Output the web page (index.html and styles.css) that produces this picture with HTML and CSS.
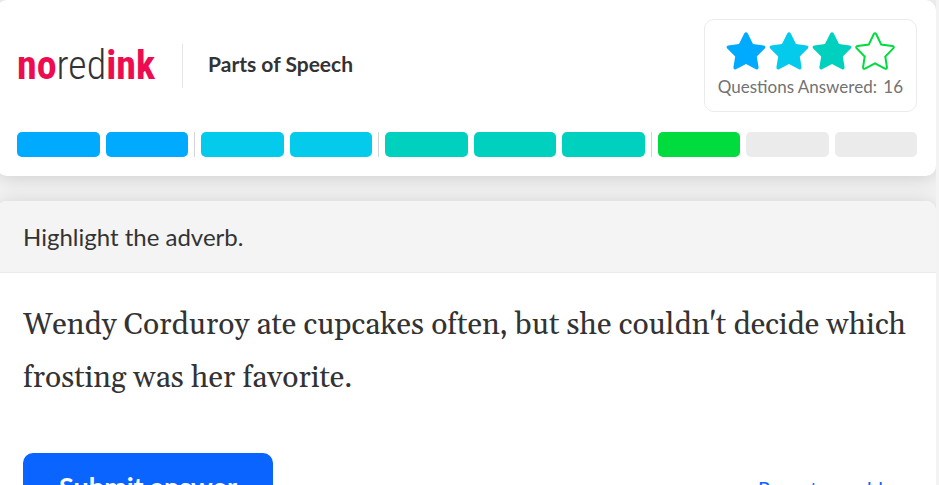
FILE: index.html
```html
<!DOCTYPE html>
<html lang="en">
<head>
  <meta charset="UTF-8" />
  <meta name="viewport" content="width=device-width, initial-scale=1" />
  <title>Parts of Speech - NoRedInk</title>
  <link rel="stylesheet" href="styles.css">
</head>
<body>
  <svg class="defs" aria-hidden="true">
    <symbol id="star" viewBox="0 0 40 38">
      <path d="M18.2 1.6 Q20 -1 21.8 1.6 L27 12 L37.8 13.6 Q40.4 14.4 38.8 16.4 L30.8 24.4 L32.6 35.2 Q32.6 38 30 37.2 L20 32 L10 37.2 Q7.4 38 7.4 35.2 L9.2 24.4 L1.2 16.4 Q-0.4 14.4 2.2 13.6 L13 12 Z" />
    </symbol>
    <symbol id="star-outline" viewBox="0 0 40 38">
      <path d="M18.7 2.2 Q20 0.2 21.3 2.2 L26.2 12.6 L37.2 14 Q39.8 14.6 38.2 16.4 L30.3 24.5 L31.9 35 Q32 37.4 29.9 36.6 L20 31.4 L10.1 36.6 Q8 37.4 8.1 35 L9.7 24.5 L1.8 16.4 Q0.2 14.6 2.8 14 L13.8 12.6 Z" />
    </symbol>
  </svg>

  <header class="card top">
    <div class="top-row">
      <a class="logo" href="#" aria-label="noredink"><b>no</b>red<b>ink</b></a>
      <h1 class="topic">Parts of Speech</h1>
      <div class="score">
        <div class="stars">
          <svg class="star blue"><use href="#star" /></svg>
          <svg class="star cyan"><use href="#star" /></svg>
          <svg class="star teal"><use href="#star" /></svg>
          <svg class="star outline"><use href="#star-outline" /></svg>
        </div>
        <div class="answered">Questions Answered: <span>16</span></div>
      </div>
    </div>

    <div class="progress">
      <div class="segment blue"></div>
      <div class="segment blue"></div>
      <div class="divider"></div>
      <div class="segment cyan"></div>
      <div class="segment cyan"></div>
      <div class="divider"></div>
      <div class="segment teal"></div>
      <div class="segment teal"></div>
      <div class="segment teal"></div>
      <div class="divider"></div>
      <div class="segment green"></div>
      <div class="segment"></div>
      <div class="segment"></div>
    </div>
  </header>

  <main class="card question">
    <h2 class="prompt">Highlight the adverb.</h2>
    <div class="content">
      <p class="sentence">Wendy Corduroy ate cupcakes often, but she couldn't decide which frosting was her favorite.</p>
      <div class="actions">
        <button class="submit" type="button">Submit answer</button>
        <a class="report" href="#">Report a problem</a>
      </div>
    </div>
  </main>
</body>
</html>
```

FILE: styles.css
```css
* {
  box-sizing: border-box;
}

body {
  margin: 0 3px 0 -3px;
  min-height: 100vh;
  font-family: Lato, "Open Sans", sans-serif;
  background: #f3f3f3;
  color: #333;
}

.defs {
  display: none;
}

.card {
  background: #fff;
  border-radius: 10px;
  box-shadow: 0 2px 20px rgba(0, 0, 0, 0.16);
}

.top {
  padding: 19px 19px 19px 20px;
  margin-bottom: 25px;
}

.top-row {
  display: flex;
  align-items: center;
  margin-bottom: 20px;
}

.logo {
  font-family: "Roboto Condensed", Roboto, "Liberation Sans", sans-serif;
  font-size: 40px;
  font-weight: 300;
  line-height: 44px;
  color: #333;
  text-decoration: none;
}

.logo b {
  font-weight: 700;
  color: #ee0b4f;
}

.topic {
  margin: 0 auto 0 27px;
  padding: 0 0 4px 25px;
  border-left: 1px solid #e5e5e5;
  font-size: 21px;
  line-height: 40px;
  font-weight: 700;
}

.score {
  padding: 12px 13px;
  height: 93px;
  border: 1px solid #ebebeb;
  border-radius: 10px;
  text-align: center;
}

.stars {
  display: flex;
  justify-content: center;
  gap: 3px;
}

.star {
  width: 40px;
  height: 38px;
}

.star.blue {
  fill: #00aaff;
}

.star.cyan {
  fill: #04cbec;
}

.star.teal {
  fill: #00d1be;
}

.star.outline {
  fill: none;
  stroke: #00db3e;
  stroke-width: 2;
}

.answered {
  margin-top: 5px;
  font-size: 17px;
  line-height: 24px;
  color: #727272;
}

.answered span {
  margin-left: 2px;
}

.progress {
  display: flex;
  gap: 6px;
  height: 25px;
}

.segment {
  flex: 1;
  border-radius: 5px;
  background: #ebebeb;
}

.segment.blue {
  background: #00aaff;
}

.segment.cyan {
  background: #04cbec;
}

.segment.teal {
  background: #00d1be;
}

.segment.green {
  background: #00db3e;
}

.divider {
  width: 1px;
  background: #d4d4d4;
}

.prompt {
  margin: 0;
  padding: 18px 26px 17px;
  background: #f4f4f4;
  border-bottom: 1px solid #ebebeb;
  border-radius: 10px 10px 0 0;
  font-size: 24px;
  line-height: 36px;
  font-weight: 400;
}

.content {
  padding: 26px 26px 30px;
}

.sentence {
  margin: 0 0 48px;
  font-family: Georgia, Gelasio, "Liberation Serif", serif;
  font-size: 30px;
  line-height: 53px;
}

.actions {
  display: flex;
  justify-content: space-between;
  align-items: center;
}

.submit {
  width: 250px;
  height: 66px;
  border: none;
  border-radius: 10px;
  background: #0a64ff;
  color: #fff;
  font-family: inherit;
  font-size: 27px;
  font-weight: 700;
  cursor: pointer;
}

.report {
  padding-top: 4px;
  color: #0a64ff;
  font-size: 20px;
  line-height: 24px;
  text-decoration: none;
}
```
